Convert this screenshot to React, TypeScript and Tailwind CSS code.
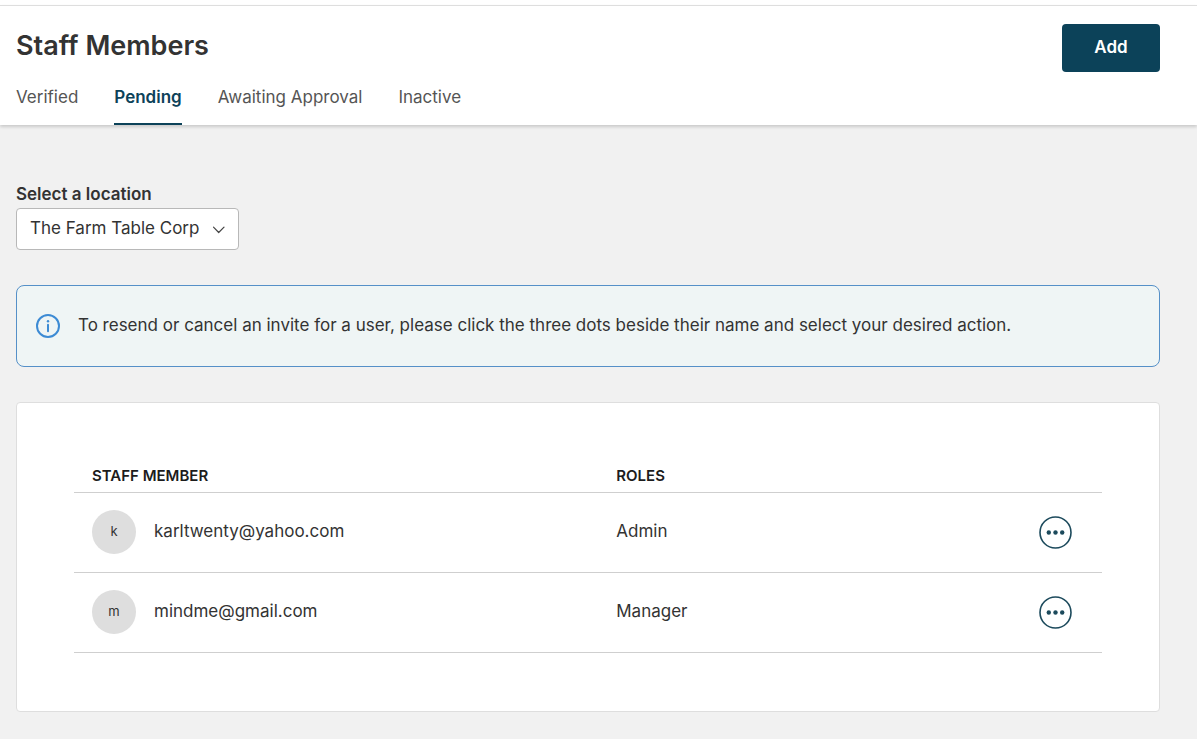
const tabs = ["Verified", "Pending", "Awaiting Approval", "Inactive"];

const staff = [
  { email: "karltwenty@yahoo.com", role: "Admin" },
  { email: "mindme@gmail.com", role: "Manager" },
];

function InfoIcon() {
  return (
    <svg viewBox="0 0 24 24" className="h-6 w-6 shrink-0 text-[#3d8bd4]" fill="none" stroke="currentColor" aria-hidden="true">
      <circle cx="12" cy="12" r="11" strokeWidth="2" />
      <path d="M12 10.8v6.4" strokeWidth="2" strokeLinecap="round" />
      <circle cx="12" cy="7.3" r="1.2" fill="currentColor" stroke="none" />
    </svg>
  );
}

function MoreIcon() {
  return (
    <svg viewBox="0 0 33 33" className="h-[33px] w-[33px]" fill="currentColor" aria-hidden="true">
      <circle cx="16.5" cy="16.5" r="15.5" fill="none" stroke="currentColor" strokeWidth="1.6" />
      <circle cx="9.8" cy="16.5" r="2.2" />
      <circle cx="16.5" cy="16.5" r="2.2" />
      <circle cx="23.2" cy="16.5" r="2.2" />
    </svg>
  );
}

export default function App() {
  return (
    <div className="min-h-screen bg-[#f1f1f1] font-['Inter','Liberation_Sans',sans-serif] text-[17px] text-[#333333]">
      {/* Page header */}
      <div className="bg-white pt-[5px]">
        <header className="relative border-t border-[#dedede] bg-white pr-[37px] pl-4 shadow-[0_2px_3px_rgba(0,0,0,0.16)]">
          <div className="flex items-start justify-between pt-[18px]">
            <h1 className="pt-[6px] text-[27px] leading-8 font-semibold">Staff Members</h1>
            <button
              type="button"
              className="h-12 w-[98px] rounded bg-[#0c4259] font-semibold text-white"
            >
              Add
            </button>
          </div>

          <nav className="flex gap-9">
            {tabs.map((tab) => (
              <a
                key={tab}
                href="#"
                aria-current={tab === "Pending" ? "page" : undefined}
                className={
                  tab === "Pending"
                    ? "h-[53px] border-b-2 border-[#0c4259] pt-[13px] leading-6 font-semibold text-[#0c4259]"
                    : "h-[53px] pt-[13px] leading-6 text-[#555555]"
                }
              >
                {tab}
              </a>
            ))}
          </nav>
        </header>
      </div>

      <main className="pt-[57px] pr-[37px] pb-7 pl-4">
        {/* Location */}
        <label htmlFor="location" className="block pb-[2px] leading-6 font-semibold">
          Select a location
        </label>
        <div className="relative inline-block align-top">
          <select
            id="location"
            className="h-[42px] w-[223px] appearance-none rounded border border-[#b8b8b8] bg-white pr-9 pl-[13px]"
          >
            <option>The Farm Table Corp</option>
          </select>
          <svg
            viewBox="0 0 12 8"
            className="pointer-events-none absolute top-[18px] right-[14px] h-2 w-3"
            fill="none"
            stroke="#444444"
            strokeWidth="1.2"
            strokeLinecap="round"
            strokeLinejoin="round"
            aria-hidden="true"
          >
            <path d="M0.5 1.2l5.2 5.3L11 1.2" />
          </svg>
        </div>

        {/* Notice */}
        <div className="mt-[35px] flex h-[82px] items-center gap-[18px] rounded-lg border border-[#5590c8] bg-[#eff5f5] px-[19px]">
          <InfoIcon />
          <p>
            To resend or cancel an invite for a user, please click the three dots beside their name and select your desired action.
          </p>
        </div>

        {/* Staff table */}
        <section className="mt-[35px] rounded border border-[#dedede] bg-white px-[57px] pt-[54px] pb-[58px]">
          <table className="w-full border-collapse text-left">
            <thead>
              <tr className="h-[35px] border-b border-[#cfcfcf] text-[15px] text-[#1c1c1c]">
                <th className="w-[51%] pt-[3px] pl-[18px] font-semibold">STAFF MEMBER</th>
                <th className="pt-[3px] pl-[18px] font-semibold">ROLES</th>
                <td />
              </tr>
            </thead>
            <tbody>
              {staff.map(({ email, role }) => (
                <tr key={email} className="h-20 border-b border-[#cfcfcf]">
                  <td className="pl-[18px]">
                    <div className="flex items-center gap-[18px]">
                      <span className="flex h-11 w-11 items-center justify-center rounded-full bg-[#dedede] text-[13px]">
                        {email[0]}
                      </span>
                      <span>{email}</span>
                    </div>
                  </td>
                  <td className="pl-[18px]">{role}</td>
                  <td className="pr-[30px]">
                    <button
                      type="button"
                      aria-label={`Actions for ${email}`}
                      className="ml-auto block rounded-full text-[#1c4a5c]"
                    >
                      <MoreIcon />
                    </button>
                  </td>
                </tr>
              ))}
            </tbody>
          </table>
        </section>
      </main>
    </div>
  );
}
